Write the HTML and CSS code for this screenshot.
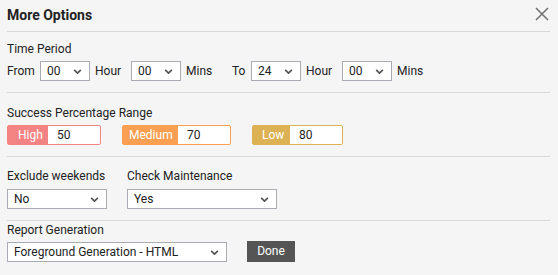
FILE: index.html
```html
<!DOCTYPE html>
<html>
<head>
<meta charset="utf-8">
<link rel="stylesheet" href="styles.css">
</head>
<body>
<div class="dialog">
  <div class="header">
    <h1 class="title">More Options</h1>
    <button class="close" aria-label="Close">
      <svg width="14" height="14" viewBox="0 0 14 14"><path d="M1 1 L13 13 M13 1 L1 13" stroke="#707070" stroke-width="1.5" fill="none"/></svg>
    </button>
  </div>

  <div class="section s1">
    <div class="label">Time Period</div>
    <div class="row">
      <span class="txt first">From</span>
      <div class="select w50"><span>00</span><svg class="chev" width="10" height="6" viewBox="0 0 10 6"><path d="M1 1 L5 5 L9 1" stroke="#555" stroke-width="2" fill="none"/></svg></div>
      <span class="txt">Hour</span>
      <div class="select w50"><span>00</span><svg class="chev" width="10" height="6" viewBox="0 0 10 6"><path d="M1 1 L5 5 L9 1" stroke="#555" stroke-width="2" fill="none"/></svg></div>
      <span class="txt">Mins</span>
      <span class="txt to">To</span>
      <div class="select w50"><span>24</span><svg class="chev" width="10" height="6" viewBox="0 0 10 6"><path d="M1 1 L5 5 L9 1" stroke="#555" stroke-width="2" fill="none"/></svg></div>
      <span class="txt">Hour</span>
      <div class="select w50"><span>00</span><svg class="chev" width="10" height="6" viewBox="0 0 10 6"><path d="M1 1 L5 5 L9 1" stroke="#555" stroke-width="2" fill="none"/></svg></div>
      <span class="txt">Mins</span>
    </div>
  </div>

  <div class="section s2">
    <div class="label">Success Percentage Range</div>
    <div class="row gap21">
      <div class="range high"><span class="tag">High</span><span class="val">50</span></div>
      <div class="range medium"><span class="tag">Medium</span><span class="val">70</span></div>
      <div class="range low"><span class="tag">Low</span><span class="val">80</span></div>
    </div>
  </div>

  <div class="section s3">
    <div class="cols">
      <div class="col c1">
        <div class="label">Exclude weekends</div>
        <div class="select w100"><span>No</span><svg class="chev" width="10" height="6" viewBox="0 0 10 6"><path d="M1 1 L5 5 L9 1" stroke="#555" stroke-width="2" fill="none"/></svg></div>
      </div>
      <div class="col">
        <div class="label">Check Maintenance</div>
        <div class="select w150"><span>Yes</span><svg class="chev" width="10" height="6" viewBox="0 0 10 6"><path d="M1 1 L5 5 L9 1" stroke="#555" stroke-width="2" fill="none"/></svg></div>
      </div>
    </div>
  </div>

  <div class="section s4">
    <div class="label">Report Generation</div>
    <div class="row gap20">
      <div class="select w220"><span>Foreground Generation - HTML</span><svg class="chev" width="10" height="6" viewBox="0 0 10 6"><path d="M1 1 L5 5 L9 1" stroke="#555" stroke-width="2" fill="none"/></svg></div>
      <button class="done">Done</button>
    </div>
  </div>
</div>
</body>
</html>
```
FILE: styles.css
```css
* { box-sizing: border-box; }
html, body { margin: 0; padding: 0; }
body {
  background: #f5f5f5;
  font-family: Roboto, "Liberation Sans", sans-serif;
  font-size: 12px;
  color: #222;
  width: 558px;
  height: 275px;
  overflow: hidden;
}
.dialog { padding: 0 8px 0 7px; }
.header {
  display: flex;
  align-items: flex-start;
  justify-content: space-between;
  height: 32px;
  padding-top: 7px;
  border-bottom: 1px solid #d9d9d9;
}
.title {
  margin: 0;
  font-size: 14px;
  font-weight: 700;
  line-height: 17px;
  color: #222;
}
.close {
  border: 0;
  background: none;
  padding: 0;
  margin: 0 1px 0 0;
  width: 14px;
  height: 14px;
  display: block;
}
.close svg { display: block; }
.section { border-bottom: 1px solid #d9d9d9; }
.label { line-height: 16px; white-space: nowrap; }
.s1 { padding: 9px 0 11px; }
.s1 .label { margin-bottom: 4px; }
.s2 { padding: 12px 0 11px; }
.s2 .label { margin-bottom: 4px; }
.s3 { padding: 11px 0 11px; }
.s3 .label { margin-bottom: 5px; }
.s4 { padding: 1px 0 0; border-bottom: 0; }
.s4 .label { margin-bottom: 4px; }
.row { display: flex; align-items: center; }
.txt { line-height: 20px; flex: none; }
.txt.first { width: 33px; }
.select + .txt { margin-left: 5px; width: 36px; }
.txt.to { margin-left: 10px; width: 19px; }
.select {
  display: flex;
  align-items: center;
  flex: none;
  height: 20px;
  border: 1px solid #a9acb2;
  background: #fff;
  padding: 0 7px 0 6px;
  color: #222;
  line-height: 18px;
}
.select span { flex: 1; white-space: nowrap; }
.chev { display: block; flex: none; width: 9px; height: 5px; }
.w50 { width: 50px; }
.w100 { width: 100px; }
.w150 { width: 150px; }
.w220 { width: 220px; }
.gap21 { gap: 21px; }
.gap20 { gap: 20px; }
.range {
  display: flex;
  height: 20px;
  border: 1px solid;
  border-radius: 2px;
  background: #fff;
  line-height: 18px;
}
.range .tag { color: #fff; }
.range .val { width: 52px; padding-left: 9px; color: #222; }
.high { border-color: #f48383; }
.high .tag { background: #f48383; width: 40px; padding-left: 10px; }
.medium { border-color: #fba052; }
.medium .tag { background: #fba052; width: 55px; padding-left: 6px; }
.low { border-color: #dcb254; }
.low .tag { background: #dcb254; width: 37px; padding-left: 9px; }
.cols { display: flex; gap: 20px; }
.c1 { width: 100px; }
.done {
  border: 0;
  background: #555;
  color: #fff;
  font-family: Roboto, "Liberation Sans", sans-serif;
  font-size: 12px;
  width: 48px;
  height: 21px;
  padding: 0;
  line-height: 21px;
  margin-top: -1px;
}
```
